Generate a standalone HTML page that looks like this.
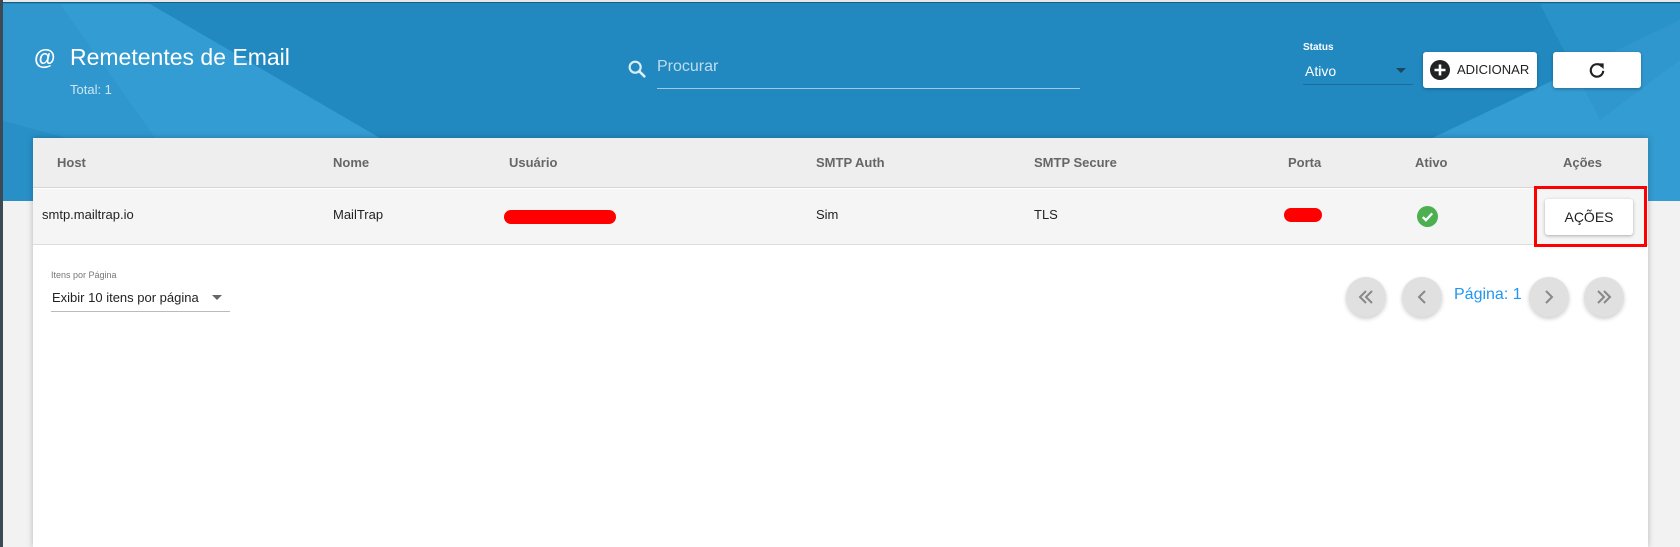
<!DOCTYPE html>
<html><head><meta charset="utf-8"><style>
*{box-sizing:border-box;margin:0;padding:0}
html,body{width:1680px;height:547px;overflow:hidden}
body{background:#f2f2f2;font-family:"Liberation Sans",sans-serif;position:relative}
.abs{position:absolute}
.hdr{left:0;top:0;width:1680px;height:201px;background:#2189c0;overflow:hidden}
.th{position:absolute;top:155px;font-size:13px;font-weight:bold;color:#666}
.td{position:absolute;top:207px;font-size:13px;color:#222}
.btn{background:#fff;border-radius:3px;box-shadow:0 1px 3px rgba(0,0,0,.3)}
.pg{width:40px;height:40px;border-radius:50%;background:#e0e0e0;box-shadow:0 2px 4px rgba(0,0,0,.2)}
</style></head><body>
<div class="abs hdr">
<svg width="1680" height="201" style="position:absolute;left:0;top:0">
<polygon points="0,4 150,4 380,138 420,201 300,201 0,120" fill="#38a1d6" opacity=".8"/>
<polygon points="0,4 60,4 200,201 0,201" fill="#2d94cb" opacity=".6"/>
<polygon points="1300,201 1680,20 1680,201" fill="#38a1d6" opacity=".8"/>
<polygon points="1540,4 1680,4 1680,60 1600,120" fill="#2d95cc" opacity=".7"/>
</svg>
<div class="abs" style="left:0;top:0;width:1680px;height:3px;background:#e8e8e8;border-bottom:1px solid #1b5d80"></div>
</div>
<div class="abs" style="left:0;top:0;width:3px;height:547px;background:#3b4a55"></div>
<div class="abs" style="left:34px;top:45px;font-size:22px;color:#fff;font-weight:bold">@</div>
<div class="abs" style="left:70px;top:44px;font-size:23px;color:#fff">Remetentes de Email</div>
<div class="abs" style="left:70px;top:82px;font-size:13px;color:#cfe6f2">Total: 1</div>
<svg class="abs" style="left:626px;top:58px" width="22" height="22" viewBox="0 0 24 24"><circle cx="10" cy="10" r="6" fill="none" stroke="#dbeef8" stroke-width="2.4"/><path d="M14.5 14.5L20 20" stroke="#dbeef8" stroke-width="2.8" stroke-linecap="round"/></svg>
<div class="abs" style="left:657px;top:58px;font-size:16px;color:#bfdcec">Procurar</div>
<div class="abs" style="left:657px;top:88px;width:423px;height:1px;background:#9ccbe4"></div>
<div class="abs" style="left:1303px;top:42px;font-size:10px;color:#fff;font-weight:bold">Status</div>
<div class="abs" style="left:1305px;top:63px;font-size:14px;color:#fff">Ativo</div>
<div class="abs" style="left:1396px;top:68px;border-left:5px solid transparent;border-right:5px solid transparent;border-top:5px solid #1d4660"></div>
<div class="abs" style="left:1303px;top:84px;width:110px;height:1px;background:#1a6c99"></div>
<div class="abs btn" style="left:1423px;top:52px;width:114px;height:36px"></div>
<svg class="abs" style="left:1430px;top:60px" width="20" height="20" viewBox="0 0 20 20"><circle cx="10" cy="10" r="10" fill="#222"/><path d="M10 4.5V15.5M4.5 10H15.5" stroke="#fff" stroke-width="2.6"/></svg>
<div class="abs" style="left:1457px;top:62px;font-size:13px;color:#222">ADICIONAR</div>
<div class="abs btn" style="left:1553px;top:52px;width:88px;height:36px"></div>
<svg class="abs" style="left:1587px;top:60px" width="20" height="20" viewBox="0 0 24 24"><path d="M18 8A7.5 7.5 0 1 0 19.5 13" fill="none" stroke="#222" stroke-width="2.6"/><path d="M13 4H20V11Z" fill="#222"/></svg>
<div class="abs" style="left:33px;top:138px;width:1615px;height:409px;background:#fff;box-shadow:0 0 6px rgba(0,0,0,.25)"></div>
<div class="abs" style="left:33px;top:138px;width:1615px;height:50px;background:#eee;border-bottom:1px solid #d6d6d6"></div>
<div class="abs" style="left:33px;top:189px;width:1615px;height:56px;background:#f5f5f5;border-bottom:1px solid #ddd"></div>
<div class="th" style="left:57px">Host</div>
<div class="th" style="left:333px">Nome</div>
<div class="th" style="left:509px">Usuário</div>
<div class="th" style="left:816px">SMTP Auth</div>
<div class="th" style="left:1034px">SMTP Secure</div>
<div class="th" style="left:1288px">Porta</div>
<div class="th" style="left:1415px">Ativo</div>
<div class="th" style="left:1563px">Ações</div>
<div class="td" style="left:42px">smtp.mailtrap.io</div>
<div class="td" style="left:333px">MailTrap</div>
<div class="abs" style="left:504px;top:210px;width:112px;height:14px;border-radius:7px;background:#f00"></div>
<div class="td" style="left:816px">Sim</div>
<div class="td" style="left:1034px">TLS</div>
<div class="abs" style="left:1284px;top:208px;width:38px;height:14px;border-radius:7px;background:#f00"></div>
<svg class="abs" style="left:1417px;top:206px" width="21" height="21" viewBox="0 0 20 20"><circle cx="10" cy="10" r="10" fill="#4caf50"/><path d="M5.5 10.5L8.5 13.5L14.5 7" fill="none" stroke="#fff" stroke-width="2.2"/></svg>
<div class="abs" style="left:1534px;top:186px;width:113px;height:61px;border:3px solid #f00"></div>
<div class="abs btn" style="left:1545px;top:199px;width:88px;height:36px;font-size:14px;color:#222;text-align:center;line-height:36px">AÇÕES</div>
<div class="abs" style="left:51px;top:270px;font-size:9px;color:#777">Itens por Página</div>
<div class="abs" style="left:52px;top:290px;font-size:13px;color:#222">Exibir 10 itens por página</div>
<div class="abs" style="left:212px;top:295px;border-left:5px solid transparent;border-right:5px solid transparent;border-top:5px solid #666"></div>
<div class="abs" style="left:51px;top:311px;width:179px;height:1px;background:#bbb"></div>
<div class="abs pg" style="left:1346px;top:277px"></div>
<div class="abs pg" style="left:1402px;top:277px"></div>
<div class="abs pg" style="left:1529px;top:277px"></div>
<div class="abs pg" style="left:1584px;top:277px"></div>
<svg class="abs" style="left:1346px;top:277px" width="40" height="40"><path d="M20 14L14 20L20 26M26 14L20 20L26 26" fill="none" stroke="#888" stroke-width="2"/></svg>
<svg class="abs" style="left:1402px;top:277px" width="40" height="40"><path d="M23 14L17 20L23 26" fill="none" stroke="#888" stroke-width="2"/></svg>
<svg class="abs" style="left:1529px;top:277px" width="40" height="40"><path d="M17 14L23 20L17 26" fill="none" stroke="#888" stroke-width="2"/></svg>
<svg class="abs" style="left:1584px;top:277px" width="40" height="40"><path d="M14 14L20 20L14 26M20 14L26 20L20 26" fill="none" stroke="#888" stroke-width="2"/></svg>
<div class="abs" style="left:1454px;top:286px;font-size:16px;color:#2196f3">Página: 1</div>
</body></html>
